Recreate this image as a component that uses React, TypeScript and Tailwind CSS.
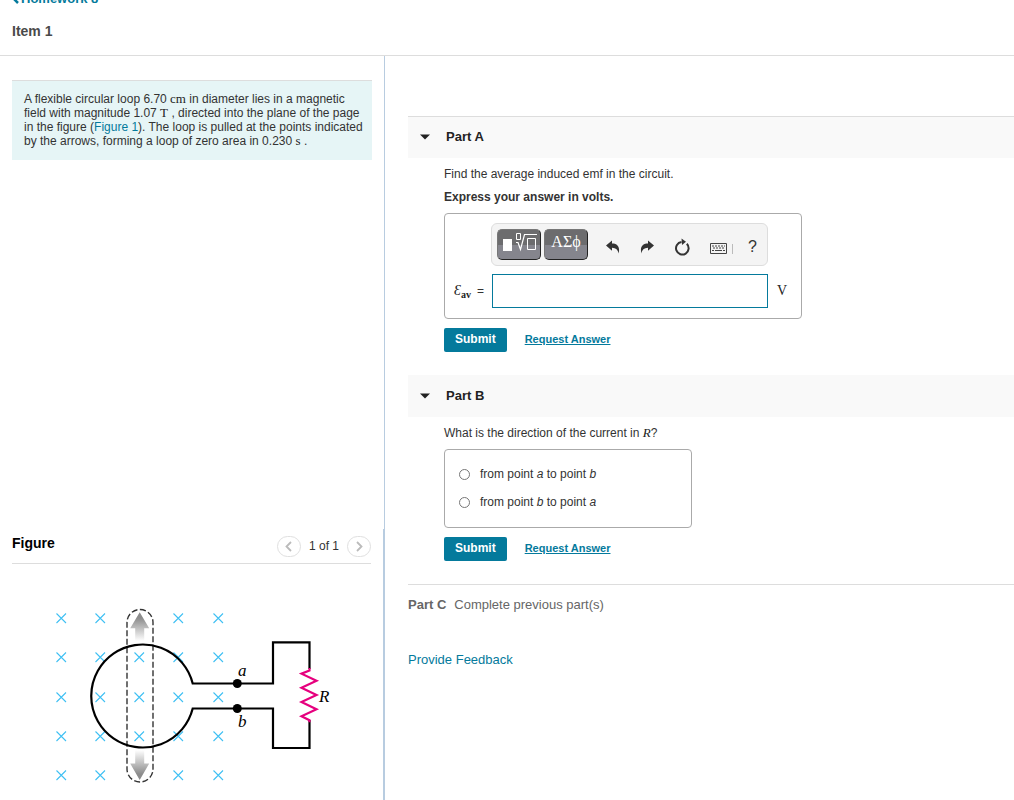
import type { ReactNode } from "react";

const COLUMNS = [49, 88, 127, 166, 206];
const ROWS = [54, 93, 133, 172, 211];

const Math = ({ children }: { children: ReactNode }) => (
  <span className="font-['Liberation_Serif',serif] text-[13px] leading-none text-[#222]">{children}</span>
);

const LoopFigure = () => (
  <svg viewBox="0 0 359 236" className="block w-full" role="img" aria-label="Loop in a magnetic field">
    <defs>
      <linearGradient id="up" x1="0" y1="0" x2="0" y2="1">
        <stop offset="0.2" stopColor="#8c8c8c" />
        <stop offset="1" stopColor="#ffffff" />
      </linearGradient>
      <linearGradient id="down" x1="0" y1="1" x2="0" y2="0">
        <stop offset="0.2" stopColor="#8c8c8c" />
        <stop offset="1" stopColor="#ffffff" />
      </linearGradient>
    </defs>
    <path d="M127.7 48.3l9.5 16h-5V77h-9V64.3h-5z" fill="url(#up)" />
    <path d="M127.7 216l9.5-16.5h-5V186h-9v13.5h-5z" fill="url(#down)" />
    <g stroke="#3fc0f3" strokeWidth="1.1">
      {ROWS.map((y, r) =>
        COLUMNS.map((x, c) =>
          c === 2 && (r === 0 || r === 4) ? null : (
            <path key={`${x}-${y}`} d={`M${x - 4.5} ${y - 4.5}l9.5 9.5m0-9.5l-9.5 9.5`} />
          ),
        ),
      )}
    </g>
    <rect x="115" y="45.5" width="26" height="172.5" rx="13" fill="none" stroke="#333" strokeWidth="1.4" strokeDasharray="6 2.5" />
    <g fill="none" stroke="#000" strokeWidth="2.2">
      <path d="M297.5 105V78.3H261v41.2h-80.3a51.5 51.5 0 1 0 0 25H261V184h36.5v-28" />
      <path d="M297.5 104v2.5l-8 3.2 15 7-15 7 15 7.2-15 7 15 7.3-15 7 8 4v2" stroke="#e6007e" />
    </g>
    <circle cx="225.3" cy="119.5" r="4.5" />
    <circle cx="225.3" cy="144.5" r="4.5" />
    <g className="font-['Liberation_Serif',serif] text-[17px] italic">
      <text x="226" y="112">a</text>
      <text x="226" y="163">b</text>
      <text x="307" y="138">R</text>
    </g>
  </svg>
);

const PartHeader = ({ title }: { title: string }) => (
  <h2 className="flex h-[41px] items-center bg-[#f9f9f9] pb-0.5 text-[13px] font-bold text-[#222]">
    <button type="button" className="flex items-center gap-4 pl-3">
      <svg width="10" height="6" viewBox="0 0 10 6" className="fill-[#222]">
        <path d="M0 .5h10L5 5.5z" />
      </svg>
      {title}
    </button>
  </h2>
);

const Actions = () => (
  <div className="mt-[9px] flex gap-[18px]">
    <button type="submit" className="h-6 rounded-xs bg-[#047a9c] px-[11px] pb-0.5 text-xs font-bold text-white">
      Submit
    </button>
    <a href="#answer" className="pt-[3px] text-[11px] leading-4 font-bold text-[#047a9c] underline">
      Request Answer
    </a>
  </div>
);

const TOOL_BUTTON =
  "flex h-[31px] w-11 justify-center rounded-[5px] border border-t-[#777] border-r-[#222] border-b-[#222] border-l-[#777] bg-linear-to-b from-[#6c6c6e] from-50% to-[#85858d] to-50%";

const Toolbar = () => (
  <div className="flex h-[43px] items-center gap-[3px] rounded-md border border-[#ddd] bg-[#f4f4f4] px-[5px]">
    <button type="button" aria-label="Templates" className={TOOL_BUTTON}>
      <svg width="36" height="28" viewBox="0 0 36 28" fill="none" stroke="#fff">
        <path d="M2 9h9v12H2z" fill="#fff" stroke="none" />
        <path d="M15.5 3.5h4v6h-4z" />
        <path d="M15 12.5h2l2.500 7L23.500 4.500H36" strokeWidth="1.2" />
        <path d="M26.5 8.5h8v11h-8z" />
      </svg>
    </button>
    <button
      type="button"
      className={`${TOOL_BUTTON} pt-1 font-['Liberation_Serif',serif] text-base leading-4 text-white`}
    >
      ΑΣϕ
    </button>
    <div className="flex items-center gap-5 pt-1 pl-[15px]">
      <button type="button" aria-label="Undo">
        <svg width="14" height="14" viewBox="0 0 14 14" className="fill-[#333]">
          <path d="M0 5.5L6 .5v3c5 0 8.500 3 6.500 10C12 10 10 8 6 7.800v3z" />
        </svg>
      </button>
      <button type="button" aria-label="Redo">
        <svg width="14" height="14" viewBox="0 0 14 14" className="fill-[#333]">
          <path d="M14 5.5L8 .5v3c-5 0-8.500 3-6.500 10C2 10 4 8 8 7.800v3z" />
        </svg>
      </button>
      <button type="button" aria-label="Reset">
        <svg width="16" height="18" viewBox="0 0 16 18" fill="none" stroke="#333" strokeWidth="2">
          <path d="M12.8 5.800A6.300 6.300 0 1 1 7.500 4" />
          <path d="M7.5 .5l4.500 3.200-4 3.300z" fill="#333" stroke="none" />
        </svg>
      </button>
      <div className="flex items-center">
        <button type="button" aria-label="Keyboard shortcuts" className="pt-1">
          <svg width="17" height="11" viewBox="0 0 17 11" className="block" fill="none" stroke="#444">
            <path d="M.5 .5h16v10H.5z" />
            <path d="M2 3h13M3 5h12" strokeDasharray="2 1" strokeWidth="1.2" />
            <path d="M2 7.5h2m1 0h7m1 0h2" />
          </svg>
        </button>
        <span className="mt-1 mr-[15px] ml-[5px] h-2.5 w-px bg-[#bbb]" />
        <button type="button" aria-label="Help" className="text-base leading-4 text-[#333]">
          ?
        </button>
      </div>
    </div>
  </div>
);

const App = () => {
  return (
    <div className="flex min-h-screen flex-col bg-white font-['Liberation_Sans',Arial,sans-serif] text-xs leading-4 text-[#333]">
      <header className="-mt-[9px] h-[65px] border-b border-[#ddd] px-3">
        <a href="#homework" className="flex items-center gap-0.5 text-[13px] leading-4 font-bold text-[#047a9c]">
          <svg width="7" height="10" viewBox="0 0 7 10" fill="none" stroke="currentColor" strokeWidth="2.5">
            <path d="M6 1L2 5l4 4" />
          </svg>
          Homework 8
        </a>
        <h1 className="mt-4 text-sm leading-4 font-bold text-[#4a4a4a]">Item 1</h1>
      </header>
      <main className="flex flex-1">
        <aside className="flex w-[385px] shrink-0 flex-col">
          <section className="flex-1 border-r border-[#b8cce0] pt-6 pr-3 pl-3">
            <p className="min-h-20 border-t border-[#ddd] bg-[#e6f5f6] pt-[11px] pr-2 pl-3 leading-[14px]">
              A flexible circular loop 6.70 <Math>cm</Math> in diameter lies in a magnetic field with magnitude 1.07{" "}
              <Math>T</Math> , directed into the plane of the page in the figure (
              <a href="#figure" className="text-[#047a9c]">
                Figure 1
              </a>
              ). The loop is pulled at the points indicated by the arrows, forming a loop of zero area in 0.230{" "}
              <Math>s</Math> .
            </p>
          </section>
          <section id="figure" className="border-r-2 border-[#b8cce0] pr-3 pl-3">
            <div className="flex h-[35px] items-center justify-between border-b border-[#ddd]">
              <h2 className="pb-1.5 text-sm font-bold text-black">Figure</h2>
              <div className="flex items-center gap-2">
                <button
                  type="button"
                  aria-label="Previous figure"
                  className="flex h-[21px] w-6 items-center justify-center rounded-full border border-[#e0e0e0]"
                >
                  <svg width="7" height="11" viewBox="0 0 7 11" fill="none" stroke="#bbb" strokeWidth="1.8">
                    <path d="M6 1L1.5 5.5 6 10" />
                  </svg>
                </button>
                <span>1 of 1</span>
                <button
                  type="button"
                  aria-label="Next figure"
                  className="flex h-[21px] w-6 items-center justify-center rounded-full border border-[#e0e0e0]"
                >
                  <svg width="7" height="11" viewBox="0 0 7 11" fill="none" stroke="#bbb" strokeWidth="1.8">
                    <path d="M1 1l4.5 4.5L1 10" />
                  </svg>
                </button>
              </div>
            </div>
            <LoopFigure />
          </section>
        </aside>
        <div className="flex-1 pt-[60px] pl-[23px]">
          <section className="border-t border-[#ddd]">
            <PartHeader title="Part A" />
            <form className="pt-2 pl-9" onSubmit={(e) => e.preventDefault()}>
              <p>Find the average induced emf in the circuit.</p>
              <p className="mt-[7px] font-bold">Express your answer in volts.</p>
              <div className="mt-2 flex h-[106px] w-[358px] rounded-sm border border-[#aaa] py-[9px] pl-[9px]">
                <label htmlFor="emf" className="flex w-[37px] items-center gap-1.5 pt-[66px] pb-4 whitespace-nowrap">
                  <span className="font-['Liberation_Serif',serif] text-sm text-[#222]">
                    <i>Ɛ</i>
                    <sub className="text-[10px] font-bold">av</sub>
                  </span>
                  =
                </label>
                <div className="flex w-[277px] flex-col gap-2">
                  <Toolbar />
                  <input
                    id="emf"
                    type="text"
                    className="ml-px h-[34px] border border-[#047a9c] bg-white px-2 outline-none"
                  />
                </div>
                <span className="mt-[58px] ml-[9px] font-['Liberation_Serif',serif] text-sm text-[#222]">V</span>
              </div>
              <Actions />
            </form>
          </section>
          <section className="mt-[23px] border-t border-[#f9f9f9]">
            <PartHeader title="Part B" />
            <form className="pt-2 pl-9" onSubmit={(e) => e.preventDefault()}>
              <p>
                What is the direction of the current in{" "}
                <Math>
                  <i>R</i>
                </Math>
                ?
              </p>
              <fieldset className="mt-2 flex h-[79px] w-[248px] flex-col gap-3 rounded-sm border border-[#aaa] pt-4 pl-3.5">
                <label className="flex items-center gap-2.5">
                  <input type="radio" name="direction" className="size-[11px] appearance-none rounded-full border border-[#767676]" />
                  <span>
                    from point <i>a</i> to point <i>b</i>
                  </span>
                </label>
                <label className="flex items-center gap-2.5">
                  <input type="radio" name="direction" className="size-[11px] appearance-none rounded-full border border-[#767676]" />
                  <span>
                    from point <i>b</i> to point <i>a</i>
                  </span>
                </label>
              </fieldset>
              <Actions />
            </form>
          </section>
          <section className="mt-[23px] flex gap-2 border-t border-[#ddd] pt-3 text-[13px] text-[#666]">
            <h2 className="font-bold">Part C</h2>
            <p>Complete previous part(s)</p>
          </section>
          <a href="#feedback" className="mt-[39px] inline-block text-[13px] text-[#047a9c]">
            Provide Feedback
          </a>
        </div>
      </main>
    </div>
  );
};

export default App;
